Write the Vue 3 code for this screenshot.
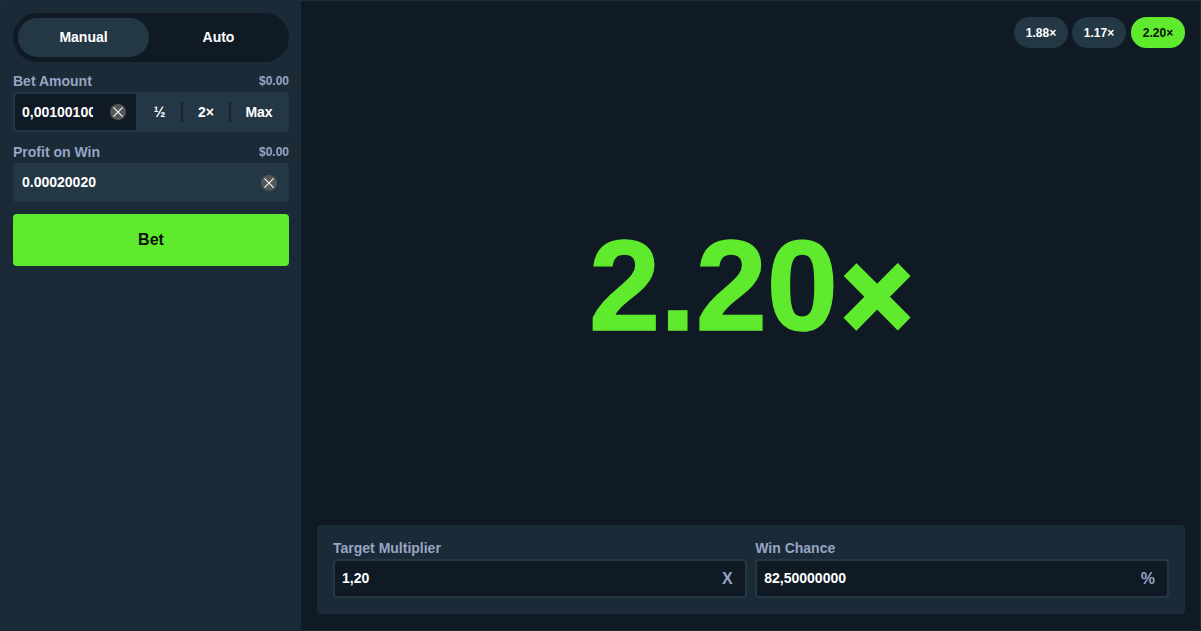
<script setup>
const pills = [
  { v: '1.88×', on: false },
  { v: '1.17×', on: false },
  { v: '2.20×', on: true }
]
const fields = [
  { label: 'Target Multiplier', value: '1,20', unit: 'X' },
  { label: 'Win Chance', value: '82,50000000', unit: '%' }
]
</script>

<template>
  <div class="app">
    <aside class="side">
      <div class="tabs">
        <button class="tab active">Manual</button>
        <button class="tab auto">Auto</button>
      </div>
      <div class="lab first"><span>Bet Amount</span><small>$0.00</small></div>
      <div class="group">
        <div class="inner">
          <span class="clip">0,00100100</span>
          <svg class="clear" viewBox="0 0 16 16"><circle cx="8" cy="8" r="8" fill="#555657"/><path d="M3.4 3.4l9.2 9.2M12.6 3.4l-9.2 9.2" stroke="#f2f2f2" stroke-width="1.2"/></svg>
        </div>
        <button class="mini half">½</button><i class="sep"></i>
        <button class="mini two">2×</button><i class="sep"></i>
        <button class="mini max">Max</button>
      </div>
      <div class="lab second"><span>Profit on Win</span><small>$0.00</small></div>
      <div class="profit">
        <span>0.00020020</span>
        <svg class="clear" viewBox="0 0 16 16"><circle cx="8" cy="8" r="8" fill="#555657"/><path d="M3.4 3.4l9.2 9.2M12.6 3.4l-9.2 9.2" stroke="#f2f2f2" stroke-width="1.2"/></svg>
      </div>
      <button class="bet">Bet</button>
    </aside>
    <main class="main">
      <div class="pills">
        <span v-for="p in pills" :key="p.v" class="pill" :class="{ on: p.on }">{{ p.v }}</span>
      </div>
      <div class="big"><span>2.20</span><span class="times">×</span></div>
      <div class="panel">
        <div v-for="f in fields" :key="f.label" class="field">
          <label>{{ f.label }}</label>
          <div class="box"><span>{{ f.value }}</span><b>{{ f.unit }}</b></div>
        </div>
      </div>
    </main>
  </div>
</template>

<style>
html, body { margin: 0; background: #0f1a24; }
</style>

<style scoped>
.app {
  position: relative;
  display: flex;
  width: 1201px;
  height: 631px;
  overflow: hidden;
  background: #0f1a24;
  font-family: "Liberation Sans", Arial, sans-serif;
  font-weight: 700;
  color: #fff;
  box-sizing: border-box;
}
.app::after {
  content: "";
  position: absolute;
  inset: 0;
  border: 1px solid #1b2d39;
  border-radius: 3px;
  pointer-events: none;
}
button { font-family: inherit; border: 0; cursor: pointer; padding: 0; }
.side {
  width: 301px;
  flex: none;
  box-sizing: border-box;
  background: #1a2b37;
  padding: 13px 12px 0 13px;
  display: flex;
  flex-direction: column;
}
.tabs {
  height: 49px;
  box-sizing: border-box;
  padding: 5px;
  border-radius: 25px;
  background: #0f1a24;
  display: flex;
}
.tab {
  border-radius: 20px;
  background: transparent;
  color: #fff;
  font-size: 14px;
  font-weight: 700;
  padding-bottom: 2px;
}
.tab.active { width: 131px; flex: none; background: #243744; }
.tab.auto { flex: 1; padding-left: 4px; }
.lab {
  display: flex;
  justify-content: space-between;
  align-items: center;
  height: 17px;
  font-size: 14px;
  color: #98a4c4;
}
.lab small { font-size: 12px; font-weight: 700; }
.lab.first { margin-top: 10px; }
.lab.second { margin-top: 11px; }
.group {
  margin-top: 3px;
  height: 40px;
  box-sizing: border-box;
  padding: 2px;
  border-radius: 4px;
  background: #243744;
  display: flex;
  align-items: center;
}
.inner {
  width: 121px;
  height: 36px;
  flex: none;
  box-sizing: border-box;
  background: #0f1a24;
  border-radius: 3px 0 0 3px;
  padding: 0 10px 0 7px;
  display: flex;
  align-items: center;
  justify-content: space-between;
  font-size: 14px;
}
.clip { width: 71px; overflow: hidden; white-space: nowrap; }
.clear { width: 16px; height: 16px; flex: none; }
.mini {
  background: transparent;
  color: #fff;
  font-size: 14px;
  font-weight: 700;
  height: 36px;
}
.half { width: 45px; padding-left: 2px; }
.two { width: 46px; }
.max { flex: 1; }
.sep { width: 2px; height: 20px; background: #152430; flex: none; }
.profit {
  margin-top: 3px;
  height: 39px;
  box-sizing: border-box;
  padding: 0 12px 2px 9px;
  border-radius: 4px;
  background: #243744;
  display: flex;
  align-items: center;
  justify-content: space-between;
  font-size: 14px;
}
.profit .clear { margin-top: 2px; }
.bet {
  margin-top: 12px;
  height: 52px;
  border-radius: 4px;
  background: #5fea2d;
  color: #06120a;
  font-size: 16px;
  font-weight: 700;
}
.main {
  flex: 1;
  min-width: 0;
  display: flex;
  flex-direction: column;
  padding: 17px 16px 17px 16px;
  box-sizing: border-box;
}
.pills {
  display: flex;
  justify-content: flex-end;
  gap: 4px;
  height: 31px;
}
.pill {
  width: 54px;
  height: 31px;
  border-radius: 16px;
  background: #243744;
  color: #fff;
  font-size: 12px;
  display: flex;
  align-items: center;
  justify-content: center;
}
.pill.on { margin-left: 1px; background: #5fea2d; color: #06120a; }
.big {
  flex: 1;
  display: flex;
  align-items: center;
  justify-content: center;
  font-size: 128px;
  color: #5fea2d;
  -webkit-text-stroke: 1.5px #5fea2d;
  line-height: 1;
  padding-bottom: 2px;
}
.times {
  font-size: 120px;
  -webkit-text-stroke: 5px #5fea2d;
  margin: 18px 1px 0 4px;
}
.panel {
  height: 89px;
  box-sizing: border-box;
  padding: 15px 16px 0;
  background: #1a2b37;
  border-radius: 4px;
  display: flex;
  gap: 8.5px;
}
.field { flex: 1; min-width: 0; }
.field label {
  display: block;
  height: 17px;
  font-size: 14px;
  color: #98a4c4;
}
.box {
  margin-top: 2px;
  height: 39px;
  box-sizing: border-box;
  border: 2px solid #243744;
  border-radius: 4px;
  background: #0f1a24;
  padding: 0 12px 2px 7px;
  display: flex;
  align-items: center;
  justify-content: space-between;
  font-size: 14px;
}
.box b { font-size: 16px; font-weight: 700; color: #98a4c4; margin-top: 2px; }
</style>
